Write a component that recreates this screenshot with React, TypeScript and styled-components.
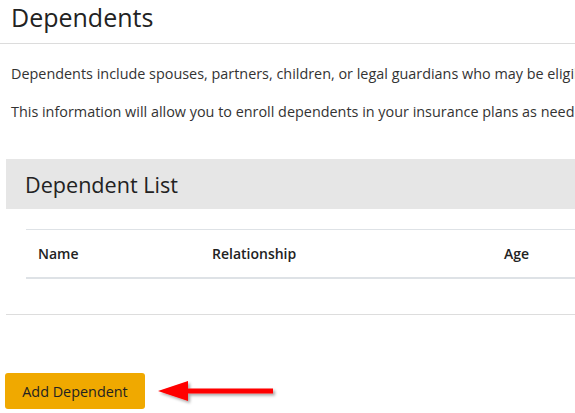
import styled, { createGlobalStyle } from 'styled-components';

const GlobalStyle = createGlobalStyle`
    html, body {
        margin: 0;
        padding: 0;
        background: #fff;
        overflow: hidden;
    }
    body {
        font-family: "Open Sans", "Liberation Sans", sans-serif;
        color: #333;
    }
`;

const Page = styled.div`
    width: 820px;
`;

const PageHeader = styled.div`
    height: 43px;
    padding: 0 11px;
    border-bottom: 1px solid #dcdcdc;
    h1 {
        margin: 0;
        font-size: 25px;
        font-weight: 400;
        line-height: 34px;
        color: #222;
    }
`;

const Intro = styled.div`
    padding: 20px 11px 0;
    p {
        margin: 0 0 18px;
        font-size: 14.4px;
        line-height: 20px;
        white-space: nowrap;
    }
`;

const Panel = styled.section`
    margin: 37px 0 0 6px;
    border-bottom: 1px solid #dddddd;
`;

const PanelHeader = styled.div`
    height: 50px;
    display: flex;
    align-items: center;
    padding-left: 19px;
    background: #e6e6e6;
    h2 {
        margin: 0;
        font-size: 21.6px;
        font-weight: 400;
        color: #222;
    }
`;

const PanelBody = styled.div`
    padding: 20px 0 35px 20px;
`;

const Table = styled.table`
    width: 780px;
    table-layout: fixed;
    border-collapse: collapse;
    th {
        text-align: left;
        font-size: 14px;
        font-weight: 600;
        line-height: 21px;
        padding: 13px 12px;
        color: #222;
        border-top: 1px solid #dee2e6;
        border-bottom: 2px solid #dee2e6;
    }
`;

const Col = styled.th<{ $width?: number }>`
    width: ${(p) => (p.$width ? `${p.$width}px` : 'auto')};
`;

const Actions = styled.div`
    display: flex;
    align-items: center;
    gap: 10px;
    margin: 58px 0 0 5px;
`;

const Button = styled.button`
    width: 140px;
    height: 36px;
    padding: 0;
    border: none;
    border-radius: 3px;
    background: #f0a900;
    color: #222;
    font-family: "Open Sans", "Liberation Sans", sans-serif;
    font-size: 14.4px;
    font-weight: 400;
    cursor: pointer;
`;

const Arrow = () => (
    <svg width="126" height="28" viewBox="0 0 126 28" style={{ overflow: 'visible' }}>
        <defs>
            <filter id="sh" x="-10%" y="-40%" width="130%" height="200%">
                <feDropShadow dx="2" dy="2" stdDeviation="1.5" floodColor="#000" floodOpacity="0.35" />
            </filter>
        </defs>
        <g filter="url(#sh)">
            <polygon points="3,14 33,4 33,11.5 118,11.5 118,16.5 33,16.5 33,24" fill="#ff0000" />
        </g>
    </svg>
);

export default function App() {
    return (
        <Page>
            <GlobalStyle />
            <PageHeader>
                <h1>Dependents</h1>
            </PageHeader>
            <Intro>
                <p>Dependents include spouses, partners, children, or legal guardians who may be eligible for coverage under your benefit plans.</p>
                <p>This information will allow you to enroll dependents in your insurance plans as needed.</p>
            </Intro>
            <Panel>
                <PanelHeader>
                    <h2>Dependent List</h2>
                </PanelHeader>
                <PanelBody>
                    <Table>
                        <thead>
                            <tr>
                                <Col $width={150}>Name</Col>
                                <Col $width={268}>Relationship</Col>
                                <Col>Age</Col>
                            </tr>
                        </thead>
                    </Table>
                </PanelBody>
            </Panel>
            <Actions>
                <Button>Add Dependent</Button>
                <Arrow />
            </Actions>
        </Page>
    );
}
